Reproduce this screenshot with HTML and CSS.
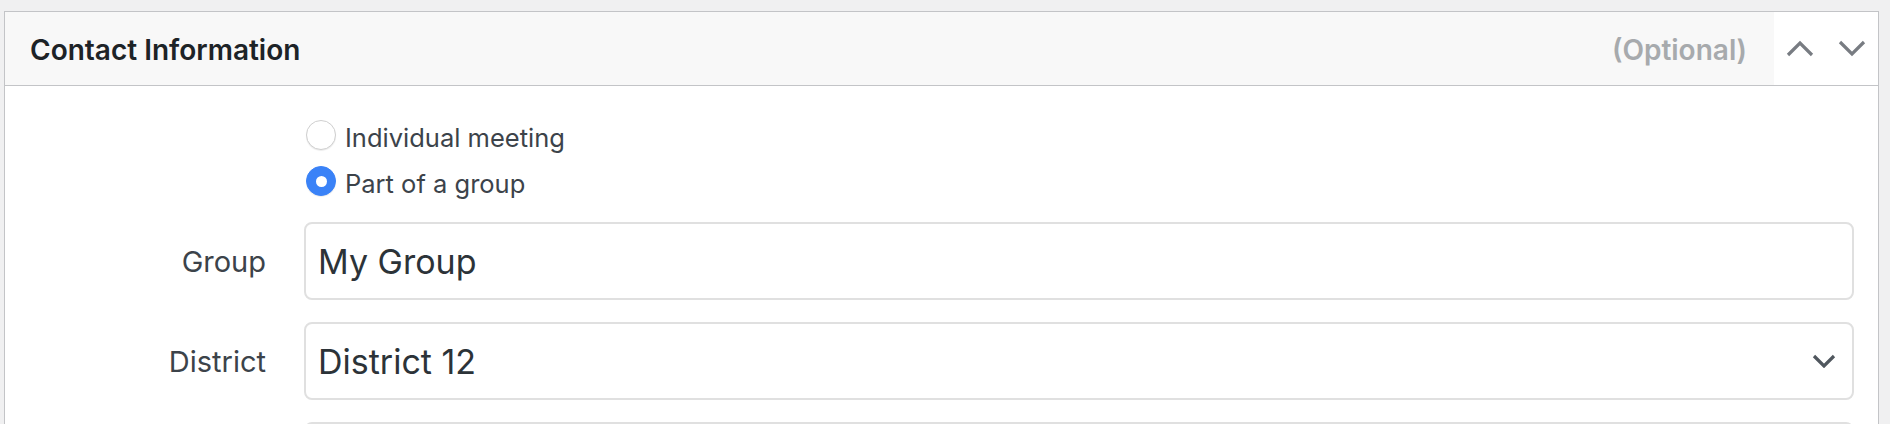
FILE: index.html
```html
<!DOCTYPE html>
<html>
<head>
<meta charset="utf-8">
<link rel="stylesheet" href="styles.css">
</head>
<body>
<div class="postbox">
  <div class="postbox-header">
    <h2 class="title">Contact Information</h2>
    <span class="optional">(Optional)</span>
    <div class="handles">
      <button class="handle" aria-label="Move up">
        <svg width="28" height="17" viewBox="0 0 28 17"><polyline points="2,15 14,3 26,15" fill="none" stroke="#787c82" stroke-width="3.2"/></svg>
      </button>
      <button class="handle" aria-label="Move down">
        <svg width="28" height="17" viewBox="0 0 28 17"><polyline points="2,2 14,14 26,2" fill="none" stroke="#787c82" stroke-width="3.2"/></svg>
      </button>
    </div>
  </div>
  <div class="postbox-body">
    <div class="form-row radios">
      <div class="label"></div>
      <div class="field">
        <label class="radio"><span class="dot"></span><span class="rtext">Individual meeting</span></label>
        <label class="radio"><span class="dot checked"></span><span class="rtext">Part of a group</span></label>
      </div>
    </div>
    <div class="form-row">
      <div class="label">Group</div>
      <div class="field"><div class="input">My Group</div></div>
    </div>
    <div class="form-row">
      <div class="label">District</div>
      <div class="field">
        <div class="input select">
          <span>District 12</span>
          <svg class="chev" width="24" height="14" viewBox="0 0 24 14"><polyline points="2,2 12,12 22,2" fill="none" stroke="#50575e" stroke-width="3.2"/></svg>
        </div>
      </div>
    </div>
    <div class="form-row">
      <div class="label"></div>
      <div class="field"><div class="input"></div></div>
    </div>
  </div>
</div>
</body>
</html>
```
FILE: styles.css
```css
* { box-sizing: border-box; }
body {
  margin: 0;
  padding: 11px 11px 0 4px;
  background: #f0f0f1;
  font-family: Inter, "Noto Sans", sans-serif;
  overflow: hidden;
  height: 424px;
}
.postbox {
  border: 1px solid #c3c4c7;
  background: #fff;
}
.postbox-header {
  display: flex;
  align-items: center;
  height: 74px;
  border-bottom: 1px solid #c3c4c7;
  background: #f8f8f8;
}
.title {
  flex: 1;
  margin: 0;
  padding: 3px 0 0 25px;
  font-size: 28px;
  font-weight: 600;
  color: #1d2327;
}
.optional {
  padding-top: 3px;
  font-size: 28px;
  font-weight: 600;
  color: #a7aaad;
  margin-right: 27px;
}
.handles {
  display: flex;
  align-self: stretch;
  background: #fff;
}
.handle {
  width: 52px;
  border: 0;
  padding: 0;
  background: transparent;
  display: flex;
  align-items: center;
  justify-content: center;
}
.postbox-body {
  padding: 26px 24px 0 0;
}
.form-row {
  display: grid;
  grid-template-columns: 261px 1fr;
  column-gap: 38px;
  align-items: center;
  margin-bottom: 22px;
}
.form-row.radios { margin-bottom: 18px; }
.label {
  text-align: right;
  font-size: 29px;
  color: #3c434a;
}
.radio {
  display: flex;
  align-items: center;
  height: 46px;
  font-size: 25.5px;
  color: #3c434a;
}
.rtext { padding-top: 4px; }
.dot {
  width: 30px;
  height: 30px;
  border-radius: 50%;
  border: 1px solid #cfcfcf;
  background: #fff;
  margin: 0 9px 0 2px;
  box-shadow: 0 1px 1px rgba(0,0,0,0.08);
  display: flex;
  align-items: center;
  justify-content: center;
}
.dot.checked {
  background: #3a82f7;
  border-color: #3a82f7;
}
.dot.checked::after {
  content: "";
  width: 11px;
  height: 11px;
  border-radius: 50%;
  background: #fff;
}
.input {
  height: 78px;
  border: 2px solid #e0e0e0;
  border-radius: 8px;
  padding: 0 14px 0 12px;
  display: flex;
  align-items: center;
  font-size: 34px;
  color: #2c3338;
}
.select { justify-content: space-between; }
.chev { margin-right: 2px; }
```
